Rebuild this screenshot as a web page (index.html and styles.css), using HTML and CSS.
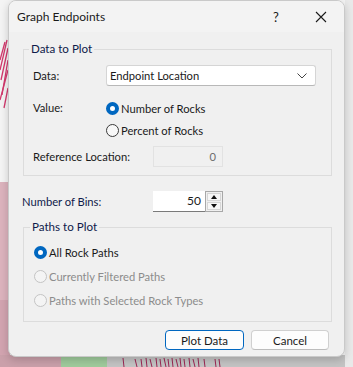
FILE: index.html
```html
<!DOCTYPE html>
<html lang="en">
<head>
    <meta charset="UTF-8">
    <title>Graph Endpoints</title>
    <link rel="stylesheet" href="styles.css">
</head>
<body>

<!--后面的绘图窗口-->
<div class="backdrop">
    <svg width="353" height="367" viewBox="0 0 353 367">
        <rect x="0" y="0" width="353" height="367" fill="#f4f4f4"/>
        <rect x="0" y="182" width="10" height="185" fill="#dcb3bd"/>
        <rect x="0" y="300" width="10" height="67" fill="#d2a4b0"/>
        <rect x="0" y="355" width="62" height="12" fill="#caa0aa"/>
        <rect x="61" y="355" width="46" height="12" fill="#9fcb9c"/>
        <rect x="107" y="355" width="246" height="12" fill="#c4c4c4"/>
        <rect x="345" y="0" width="8" height="367" fill="#e9e9e9"/>
        <g stroke="#d2386c" stroke-width="1.3">
            <line x1="0" y1="70" x2="7" y2="40"/>
            <line x1="1" y1="80" x2="8" y2="48"/>
            <line x1="2" y1="95" x2="8" y2="60"/>
            <line x1="0" y1="100" x2="8" y2="70"/>
            <line x1="4" y1="108" x2="8" y2="88"/>
            <line x1="0" y1="60" x2="5" y2="42"/>
        </g>
        <g stroke="#9c2452" stroke-width="1">
            <line x1="123" y1="358" x2="124" y2="367"/>
            <line x1="135" y1="359" x2="137" y2="367"/>
            <line x1="141" y1="359" x2="142" y2="367"/>
            <line x1="146" y1="358" x2="147" y2="367"/>
            <line x1="150" y1="359" x2="152" y2="367"/>
            <line x1="156" y1="358" x2="157" y2="367"/>
            <line x1="160" y1="359" x2="161" y2="367"/>
            <line x1="164" y1="358" x2="166" y2="367"/>
            <line x1="168" y1="359" x2="169" y2="367"/>
            <line x1="172" y1="358" x2="173" y2="367"/>
            <line x1="176" y1="359" x2="178" y2="367"/>
            <line x1="180" y1="358" x2="181" y2="367"/>
            <line x1="184" y1="359" x2="185" y2="367"/>
            <line x1="189" y1="358" x2="190" y2="367"/>
            <line x1="193" y1="359" x2="195" y2="367"/>
            <line x1="198" y1="358" x2="199" y2="367"/>
            <line x1="204" y1="359" x2="205" y2="367"/>
            <line x1="215" y1="359" x2="216" y2="367"/>
            <line x1="219" y1="359" x2="220" y2="367"/>
        </g>
    </svg>
</div>

<!--对话框-->
<div class="dialog">
    <div class="titlebar">
        <span class="title">Graph Endpoints</span>
        <span class="help">?</span>
        <span class="close">
            <svg width="12" height="12" viewBox="0 0 12 12">
                <path d="M1 1 L11 11 M11 1 L1 11" stroke="#1a1a1a" stroke-width="1.1" fill="none"/>
            </svg>
        </span>
    </div>

    <div class="content">
        <fieldset class="group group-data">
            <legend>Data to Plot</legend>
            <div class="row row-data">
                <span class="lbl">Data:</span>
                <div class="select">
                    <span>Endpoint Location</span>
                    <svg width="10" height="6" viewBox="0 0 10 6">
                        <path d="M0.5 0.5 L5 5 L9.5 0.5" stroke="#444" stroke-width="1" fill="none"/>
                    </svg>
                </div>
            </div>
            <div class="row row-value">
                <span class="lbl">Value:</span>
                <div class="radios">
                    <div class="radio checked"><i></i>Number of Rocks</div>
                    <div class="radio"><i></i>Percent of Rocks</div>
                </div>
            </div>
            <div class="row row-ref">
                <span class="lbl lbl-wide">Reference Location:</span>
                <div class="field field-disabled">0</div>
            </div>
        </fieldset>

        <div class="row row-bins">
            <span class="lbl lbl-bins">Number of Bins:</span>
            <div class="field field-bins">50</div>
            <div class="spin">
                <span class="spin-btn"><b class="up"></b></span>
                <span class="spin-btn"><b class="down"></b></span>
            </div>
        </div>

        <fieldset class="group group-paths">
            <legend>Paths to Plot</legend>
            <div class="radio radio-path checked"><i></i>All Rock Paths</div>
            <div class="radio radio-path disabled"><i></i>Currently Filtered Paths</div>
            <div class="radio radio-path disabled"><i></i>Paths with Selected Rock Types</div>
        </fieldset>

        <div class="buttons">
            <button class="btn btn-default">Plot Data</button>
            <button class="btn">Cancel</button>
        </div>
    </div>
</div>

</body>
</html>
```

FILE: styles.css
```css
* {
    margin: 0;
    padding: 0;
    box-sizing: border-box;
}

body {
    width: 353px;
    height: 367px;
    overflow: hidden;
    position: relative;
    font-family: Lato, "Noto Sans", sans-serif;
    font-size: 11.2px;
    color: #1a1a1a;
    background-color: #f4f4f4;
}

/*后面的图*/
.backdrop {
    position: absolute;
    left: 0;
    top: 0;
}

.backdrop svg {
    display: block;
}

/*对话框*/
.dialog {
    position: relative;
    margin-left: 8px;
    width: 337px;
    height: 357px;
    background-color: #f0f0f0;
    border: 1px solid #c9c9c9;
    border-radius: 8px;
    box-shadow: 0 3px 8px rgba(0, 0, 0, 0.18);
    overflow: hidden;
}

.titlebar {
    height: 31px;
    display: flex;
    align-items: center;
    padding-left: 8px;
    background-color: #f3f3f3;
}

.title {
    flex: 1;
    font-size: 12px;
    color: #1a1a1a;
}

.help {
    width: 20px;
    font-size: 13px;
    margin-right: 18px;
    text-align: center;
}

.close {
    width: 40px;
    display: flex;
    justify-content: center;
    padding-right: 6px;
}

.content {
    padding: 9px 14px 0 13px;
}

.row {
    display: flex;
    align-items: center;
}

.lbl {
    width: 73px;
}

.lbl-wide {
    width: 120px;
}

/*分组框*/
.group {
    margin-left: 1px;
    width: 309px;
    border: 1px solid #dcdcdc;
    padding: 0 0 0 9px;
}

.group legend {
    margin-left: -4px;
    padding: 0 2px;
    line-height: 16px;
    font-size: 11.6px;
    color: #0f1a4a;
}

.group-data {
    padding-top: 8px;
    padding-bottom: 8px;
}

.row-data {
    height: 21px;
}

.select {
    width: 210px;
    height: 21px;
    background-color: #fff;
    border: 1px solid #d5d5d5;
    border-bottom-color: #b8b8b8;
    border-radius: 3px;
    display: flex;
    align-items: center;
    justify-content: space-between;
    padding: 0 8px 0 3px;
}

.row-value {
    align-items: flex-start;
    margin-top: 11px;
}

.row-value .lbl {
    line-height: 22px;
}

.radio {
    height: 22px;
    display: flex;
    align-items: center;
}

.radio i {
    width: 13px;
    height: 13px;
    border-radius: 50%;
    border: 1px solid #3a3a3a;
    background-color: #f8f8f8;
    margin-right: 2px;
}

.radio.checked i {
    border: 4px solid #0067c0;
    background-color: #fff;
}

.radio.disabled {
    color: #8c8c8c;
}

.radio.disabled i {
    border-color: #c4c4c4;
    background-color: #f4f4f4;
}

.row-ref {
    margin-top: 5px;
}

.field {
    height: 21px;
    text-align: right;
    line-height: 19px;
    padding-right: 6px;
}

.field-disabled {
    width: 70px;
    border: 1px solid #e2e2e2;
    color: #6d6d6d;
}

/*数量*/
.row-bins {
    margin-top: 15px;
}

.lbl-bins {
    width: 131px;
    color: #0f1a4a;
}

.field-bins {
    width: 52px;
    background-color: #fff;
    border-bottom: 1px solid #7a7a7a;
    padding-right: 4px;
    font-size: 12px;
}

.spin {
    width: 18px;
    height: 21px;
    border: 1px solid #a8a8a8;
    display: flex;
    flex-direction: column;
    padding: 1px;
    gap: 1px;
}

.spin-btn {
    flex: 1;
    background-color: #f7f7f7;
    border: 1px solid #d6d6d6;
    display: flex;
    align-items: center;
    justify-content: center;
}

.spin-btn b {
    width: 0;
    height: 0;
    border-left: 3px solid transparent;
    border-right: 3px solid transparent;
}

.spin-btn .up {
    border-bottom: 4px solid #111;
}

.spin-btn .down {
    border-top: 4px solid #111;
}

/*路径*/
.group-paths {
    margin-top: 7px;
    padding-top: 5px;
    padding-bottom: 9px;
    padding-left: 10px;
}

.radio-path {
    height: 24px;
}

/*按钮*/
.buttons {
    display: flex;
    justify-content: flex-end;
    gap: 7px;
    margin-top: 8px;
    padding-right: 1px;
}

.btn {
    font-family: inherit;
    font-size: 11.5px;
    color: #1a1a1a;
    height: 20px;
    width: 78px;
    background-color: #fdfdfd;
    border: 1px solid #d0d0d0;
    border-bottom-color: #bdbdbd;
    border-radius: 4px;
}

.btn-default {
    width: 79px;
    border: 1px solid #0067c0;
}
```
